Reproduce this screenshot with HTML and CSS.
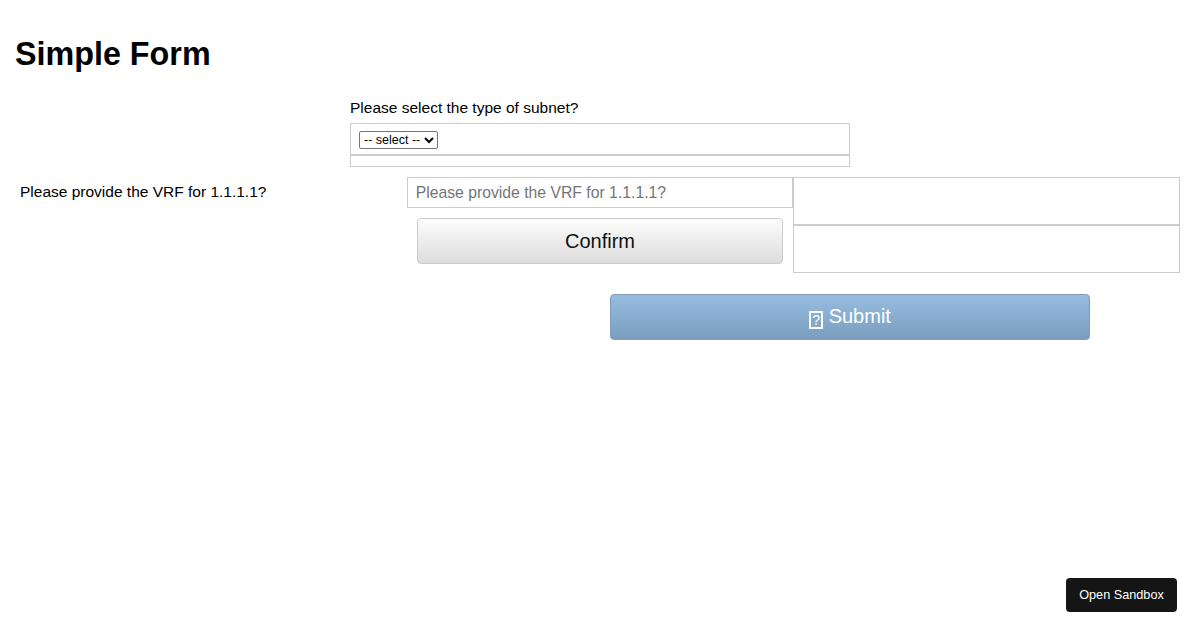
FILE: index.html
```html
<!DOCTYPE html>
<html lang="en">
  <head>
    <meta charset="UTF-8">
    <meta name="viewport" content="width=device-width, initial-scale=1.0"/>
    <title>Simple Form</title>
    <link rel="stylesheet" href="styles.css">
  </head>
  <body>
    <h1 class="title">Simple Form</h1>
    <section class="subnet">
      <label class="subnet-label" for="subnet">Please select the type of subnet?</label>
      <div class="subnet-box">
        <select id="subnet" class="subnet-select">
          <option>-- select --</option>
        </select>
      </div>
      <div class="subnet-extra"></div>
    </section>
    <div class="vrf-row">
      <div class="vrf-label">Please provide the VRF for 1.1.1.1?</div>
      <div class="vrf-input">
        <input type="text" placeholder="Please provide the VRF for 1.1.1.1?">
        <button class="confirm">Confirm</button>
      </div>
      <div class="vrf-out">
        <div class="out-box"></div>
        <div class="out-box"></div>
      </div>
    </div>
    <button class="submit"><span class="tofu">?</span> Submit</button>
    <button class="sandbox">Open Sandbox</button>
  </body>
</html>
```

FILE: styles.css
```css
html, body {
  margin: 0;
}
body {
  font-family: "Liberation Sans", Arial, sans-serif;
  color: #000;
  background: #fff;
}
.title {
  margin: 0;
  padding: 36px 0 0 15px;
  font-size: 32.3px;
  line-height: 37px;
  font-weight: bold;
}
.subnet {
  width: 500px;
  margin: 24px auto 0;
}
.subnet-label {
  display: block;
  font-size: 15.5px;
  line-height: 22px;
  margin-bottom: 4px;
}
.subnet-box {
  border: 1px solid #ccc;
  padding: 7px 8px 5px;
}
.subnet-select {
  display: block;
  height: 18px;
  font-family: "Liberation Sans", Arial, sans-serif;
  font-size: 12.5px;
  padding: 0;
  border: 1px solid #767676;
  border-radius: 2px;
  background: #fff;
}
.subnet-extra {
  height: 10px;
  border: 1px solid #ccc;
}
.vrf-row {
  display: grid;
  grid-template-columns: repeat(3, 1fr);
  margin: 10px 20px 0;
}
.vrf-label {
  padding-top: 6px;
  font-size: 15.5px;
}
.vrf-input input {
  display: block;
  box-sizing: border-box;
  width: 100%;
  height: 31px;
  margin: 0;
  padding: 0 8px;
  border: 1px solid #ccc;
  font-family: "Liberation Sans", Arial, sans-serif;
  font-size: 15.75px;
}
.vrf-input input::placeholder {
  color: #757575;
}
.confirm {
  display: block;
  width: calc(100% - 20px);
  height: 46px;
  margin: 10px 10px 9px;
  padding-top: 2px;
  border: 1px solid #ccc;
  border-radius: 4px;
  background: linear-gradient(#fdfdfd, #dcdcdc);
  color: #111;
  font-family: "Liberation Sans", Arial, sans-serif;
  font-size: 20px;
}
.out-box {
  box-sizing: border-box;
  height: 48px;
  border: 1px solid #ccc;
}
.submit {
  display: block;
  width: 480px;
  height: 46px;
  margin: 21px 0 0 610px;
  padding-top: 1px;
  border: 1px solid #7c9cbb;
  border-radius: 4px;
  background: linear-gradient(#97bde1, #7a9dbd);
  color: #fff;
  font-family: "Liberation Sans", Arial, sans-serif;
  font-size: 20px;
}
.tofu {
  display: inline-block;
  box-sizing: border-box;
  width: 14px;
  height: 18px;
  border: 2px solid #fff;
  font-size: 14px;
  line-height: 14px;
  text-align: center;
  vertical-align: -2px;
}
.sandbox {
  position: fixed;
  right: 23px;
  bottom: 18px;
  width: 111px;
  height: 34px;
  border: none;
  border-radius: 4px;
  background: #151515;
  color: #fff;
  font-family: "Liberation Sans", Arial, sans-serif;
  font-size: 12.7px;
}
```
